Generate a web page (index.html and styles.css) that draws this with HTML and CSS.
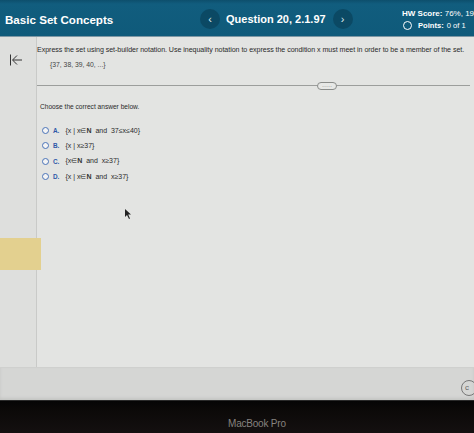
FILE: index.html
```html
<!DOCTYPE html>
<html>
<head>
<meta charset="utf-8">
<link rel="stylesheet" href="styles.css">
</head>
<body>
<div class="screen">
  <header class="topbar">
    <div class="title">Basic Set Concepts</div>
    <div class="qnav">
      <span class="navbtn">&#8249;</span>
      <span class="qname">Question 20, 2.1.97</span>
      <span class="navbtn">&#8250;</span>
    </div>
    <div class="score">
      <div class="hw"><b>HW Score:</b> 76%, 19</div>
      <div class="pts"><span class="ring"></span><b>Points:</b> 0 of 1</div>
    </div>
  </header>
  <div class="content">
    <aside class="side">
      <div class="collapse">
        <svg width="14" height="12" viewBox="0 0 14 12"><path d="M1.5 0.5V11.5M13 6H4M8 1.5L3.5 6L8 10.5" fill="none" stroke="#333" stroke-width="1"/></svg>
      </div>
      <div class="marker"></div>
    </aside>
    <main class="main">
      <p class="prompt">Express the set using set-builder notation. Use inequality notation to express the condition x must meet in order to be a member of the set.</p>
      <p class="setv">{37, 38, 39, 40, ...}</p>
      <div class="divider"><span class="dots">&middot;&middot;&middot;&middot;&middot;</span></div>
      <p class="choose">Choose the correct answer below.</p>
      <ul class="opts">
        <li><span class="radio"></span><b>A.</b><span>{x | x∈<b>N</b> &nbsp;and &nbsp;37≤x≤40}</span></li>
        <li><span class="radio"></span><b>B.</b><span>{x | x≥37}</span></li>
        <li><span class="radio"></span><b>C.</b><span>{x∈<b>N</b> &nbsp;and &nbsp;x≥37}</span></li>
        <li><span class="radio"></span><b>D.</b><span>{x | x∈<b>N</b> &nbsp;and &nbsp;x≥37}</span></li>
      </ul>
      <svg class="cursor" width="7" height="10" viewBox="0 0 7 10"><path d="M0 0L0 8L2 6L4 10L5 9.5L3.2 5.6L6 5.4Z" fill="#222"/></svg>
    </main>
  </div>
  <footer class="bottombar"><span class="circbtn">c</span></footer>
</div>
<div class="bezel"><span class="brand">MacBook Pro</span></div>
</body>
</html>
```
FILE: styles.css
```css
html, body { margin: 0; padding: 0; }
body {
  width: 474px; height: 433px; overflow: hidden;
  font-family: "Liberation Sans", Arial, sans-serif;
  background: #111;
}
.screen {
  height: 400px; display: flex; flex-direction: column;
  background: #e3e4e2;
}
.topbar {
  height: 36px; flex: none;
  background: linear-gradient(#0d4f6c 0, #115d7e 4px, #0f5a7a 100%);
  border-bottom: 1px solid #7d97a4;
  display: flex; align-items: center; color: #fff;
  position: relative;
}
.title { font-weight: bold; font-size: 11.6px; padding-left: 5px; width: 195px; padding-top: 2px; }
.qnav { display: flex; align-items: center; padding-top: 2px; }
.navbtn {
  width: 20px; height: 20px; border-radius: 50%;
  background: #0b4964; color: #dfe9ee; font-size: 11px;
  display: flex; align-items: center; justify-content: center;
}
.qname { font-weight: bold; font-size: 11px; margin: 0 7px 0 6px; }
.score { margin-left: auto; padding-top: 3px; white-space: nowrap; width: 72px; }
.hw { margin-bottom: 3px; font-size: 8px; }
.pts { display: flex; align-items: center; padding-left: 1px; font-size: 7.6px; }
.pts b { margin-right: 3px; }
.ring { width: 7px; height: 7px; border: 1.3px solid #fff; border-radius: 50%; margin-right: 6px; }
.content { flex: 1; display: flex; }
.side {
  width: 36px; flex: none; background: #dedfdd;
  border-right: 1px solid #c9cac8; position: relative;
}
.collapse { padding: 15px 0 0 9px; }
.marker {
  position: absolute; left: 0; top: 201px; width: 41px; height: 32px;
  background: #e3d08f;
}
.main { flex: 1; padding-left: 0; position: relative; color: #2a2a2a; }
.prompt { margin: 9px 0 0 0; font-size: 7.1px; letter-spacing: -0.05px; white-space: nowrap; }
.setv { margin: 7px 0 0 13px; font-size: 6.8px; color: #444; }
.divider {
  margin: 17px 4px 0 0; border-top: 1px solid #9c9e9c; position: relative; height: 0;
}
.dots {
  position: absolute; left: 280px; top: -4px; width: 18px; height: 6px;
  border: 1px solid #8a8c8a; border-radius: 4px; background: #e7e8e6;
  font-size: 6px; line-height: 6px; text-align: center; color: #555;
}
.choose { margin: 17px 0 0 3px; font-size: 6.6px; }
.opts { list-style: none; margin: 13px 0 0 5px; padding: 0; font-size: 7px; }
.opts li { display: flex; align-items: center; height: 15.3px; }
.opts li > b { color: #2f57a8; margin: 0 6px 0 4px; font-size: 6.4px; }
.opts li span b { color: #333; }
.radio { width: 5px; height: 5px; border: 1px solid #4a73b8; border-radius: 50%; background: #f4f4f4; }
.cursor { position: absolute; left: 88px; top: 172px; }
.bottombar {
  height: 32px; flex: none; background: #d5d6d4;
  border-top: 1px solid #cfd0ce; position: relative;
  box-shadow: inset 0 -2px 3px #c4c5c3;
}
.circbtn {
  position: absolute; left: 461px; top: 12px; width: 14px; height: 14px;
  border: 1.3px solid #777; border-radius: 50%; font-size: 8px; color: #666;
  line-height: 14px; text-indent: 3px; overflow: hidden;
}
.bezel {
  height: 33px; background: linear-gradient(#050505 0, #0b0908 8px, #141010 100%);
  position: relative; border-top: 1px solid #2a2a2a; box-sizing: border-box;
}
.brand {
  position: absolute; left: 228px; top: 17px; font-size: 10px;
  color: #86827f; letter-spacing: -0.2px;
}
```
